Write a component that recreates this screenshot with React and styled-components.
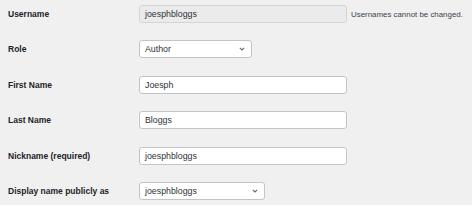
import styled, { createGlobalStyle } from "styled-components";

const GlobalStyle = createGlobalStyle`
  html, body {
    margin: 0;
    padding: 0;
    background: #ffffff;
  }
  body {
    font-family: "Liberation Sans", Arial, sans-serif;
  }
`;

const fields = [
  { label: "Username", type: "text", value: "joesphbloggs", disabled: true, hint: "Usernames cannot be changed." },
  { label: "Role", type: "select", value: "Author", width: 113 },
  { label: "First Name", type: "text", value: "Joesph" },
  { label: "Last Name", type: "text", value: "Bloggs" },
  { label: "Nickname (required)", type: "text", value: "joesphbloggs" },
  { label: "Display name publicly as", type: "select", value: "joesphbloggs", width: 126 },
];

const Chevron = () => (
  <svg width="6" height="4" viewBox="0 0 6 4" fill="none">
    <path d="M0.8 0.8 L3 3 L5.2 0.8" stroke="#646970" strokeWidth="1.1" />
  </svg>
);

const App = () => (
  <>
    <GlobalStyle />
    <Page>
      <Form>
        {fields.map((f) => (
          <Row key={f.label}>
            <Label>{f.label}</Label>
            {f.type === "select" ? (
              <Select $width={f.width}>
                <span>{f.value}</span>
                <Chevron />
              </Select>
            ) : (
              <Input $disabled={f.disabled}>{f.value}</Input>
            )}
            {f.hint && <Hint>{f.hint}</Hint>}
          </Row>
        ))}
      </Form>
    </Page>
  </>
);

const Page = styled.div`
  width: 472px;
  height: 205px;
  background: #f0f0f1;
  box-sizing: border-box;
  padding: 5px 0 0 8px;
`;
const Form = styled.div`
  display: flex;
  flex-direction: column;
  gap: 17.4px;
`;
const Row = styled.div`
  display: flex;
  align-items: center;
  height: 18px;
`;
const Label = styled.div`
  width: 131px;
  flex: none;
  font-size: 8.5px;
  font-weight: 700;
  color: #1d2327;
`;
const Input = styled.div`
  box-sizing: border-box;
  width: 208px;
  height: 18px;
  display: flex;
  align-items: center;
  padding: 0 5px;
  font-size: 8.8px;
  color: #2c3338;
  background: ${(p) => (p.$disabled ? "#ebebec" : "#ffffff")};
  border: 1px solid ${(p) => (p.$disabled ? "#d3d4d6" : "#c3c4c7")};
  border-radius: 3px;
`;
const Select = styled(Input)`
  width: ${(p) => p.$width}px;
  justify-content: space-between;
  padding: 0 6px 0 5px;
`;
const Hint = styled.div`
  margin-left: 4px;
  font-size: 7.9px;
  color: #3c434a;
`;

export default App;
